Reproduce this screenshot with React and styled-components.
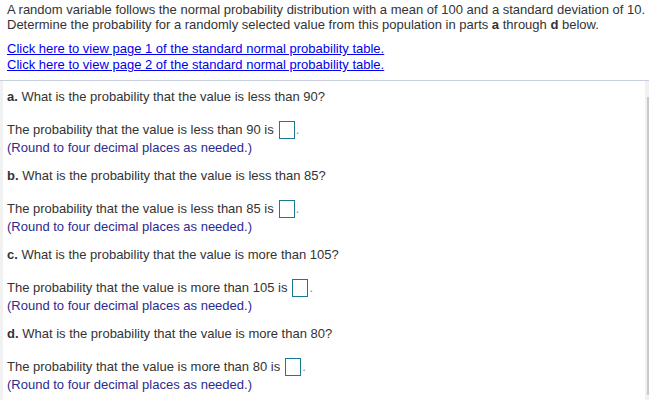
import React from "react";
import styled, { createGlobalStyle } from "styled-components";

const Global = createGlobalStyle`
  html, body { margin: 0; padding: 0; background: #fff; }
  body { font-family: Arial, "Liberation Sans", sans-serif; font-size: 13px; color: #333; }
`;

const Page = styled.div`
  width: 649px;
  height: 400px;
  overflow: hidden;
  display: flex;
  flex-direction: column;
`;

const Header = styled.div`
  padding: 2px 0 7px 7px;
  border-bottom: 1px solid #c8cfde;
`;

const Intro = styled.p`
  margin: 0;
  line-height: 15px;
`;

const Links = styled.div`
  margin-top: 9px;
  display: flex;
  flex-direction: column;
`;

const Link = styled.a`
  color: #0000ee;
  text-decoration: underline;
  line-height: 16px;
  cursor: pointer;
`;

const Body = styled.div`
  flex: 1;
  display: flex;
  border-left: 3px solid #f1f1f1;
`;

const Content = styled.div`
  flex: 1;
  padding: 8px 0 0 4px;
`;

const Scroll = styled.div`
  width: 4px;
  background: #f1f1f1;
  display: flex;
  justify-content: flex-end;
  padding: 16px 0 10px;
`;

const Thumb = styled.div`
  width: 2px;
  background: #c9c9c9;
`;

const Part = styled.div`
  margin-bottom: 11px;
`;

const Question = styled.div`
  line-height: 16px;
  margin-bottom: 16px;
`;

const Label = styled.b`
  font-weight: bold;
`;

const Answer = styled.div`
  line-height: 18px;
  display: flex;
  align-items: center;
`;

const Box = styled.span`
  display: inline-block;
  width: 16px;
  height: 18px;
  box-sizing: border-box;
  border: 1px solid #1a7a96;
  margin-left: 5px;
`;

const Dot = styled.span`
  margin-left: 1px;
  color: #888;
`;

const Hint = styled.div`
  color: #2b2b8f;
  line-height: 18px;
`;

const parts = [
  { l: "a", q: "What is the probability that the value is less than 90?", a: "The probability that the value is less than 90 is" },
  { l: "b", q: "What is the probability that the value is less than 85?", a: "The probability that the value is less than 85 is" },
  { l: "c", q: "What is the probability that the value is more than 105?", a: "The probability that the value is more than 105 is" },
  { l: "d", q: "What is the probability that the value is more than 80?", a: "The probability that the value is more than 80 is" },
];

export default function App() {
  return (
    <Page>
      <Global />
      <Header>
        <Intro>
          A random variable follows the normal probability distribution with a mean of 100 and a standard deviation of 10.
          <br />
          Determine the probability for a randomly selected value from this population in parts <Label>a</Label> through <Label>d</Label> below.
        </Intro>
        <Links>
          <div><Link>Click here to view page 1 of the standard normal probability table.</Link></div>
          <div><Link>Click here to view page 2 of the standard normal probability table.</Link></div>
        </Links>
      </Header>
      <Body>
        <Content>
          {parts.map((p) => (
            <Part key={p.l}>
              <Question><Label>{p.l}.</Label> {p.q}</Question>
              <Answer>{p.a}<Box /><Dot>.</Dot></Answer>
              <Hint>(Round to four decimal places as needed.)</Hint>
            </Part>
          ))}
        </Content>
        <Scroll><Thumb /></Scroll>
      </Body>
    </Page>
  );
}
